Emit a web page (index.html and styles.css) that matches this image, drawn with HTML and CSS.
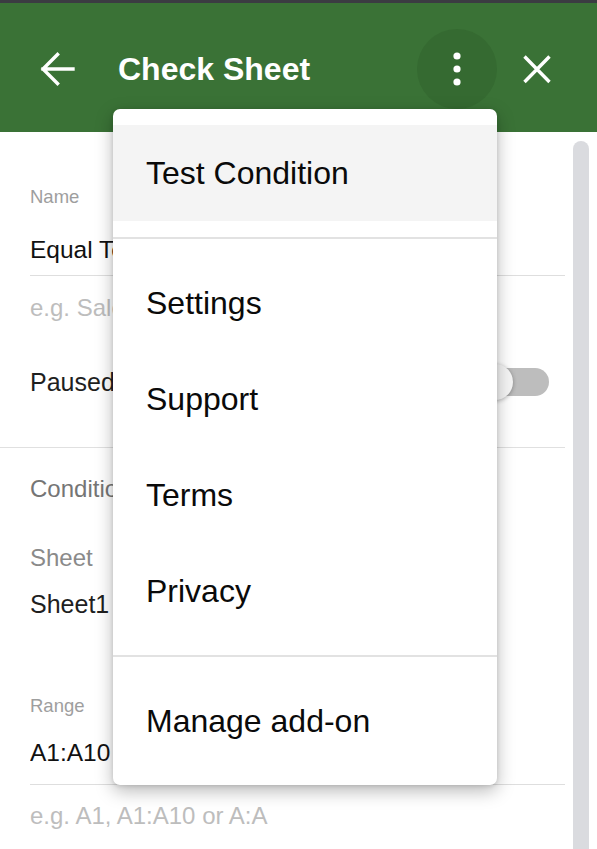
FILE: index.html
```html
<!DOCTYPE html>
<html>
<head>
<meta charset="utf-8">
<link rel="stylesheet" href="styles.css">
</head>
<body>
<div class="statusbar"></div>
<header class="appbar">
  <svg class="icon back" width="36" height="36" viewBox="0 0 36 36"><path d="M33 18H3M17.5 3.5L3 18l14.5 14.5" fill="none" stroke="#fff" stroke-width="3.4" stroke-linecap="square"/></svg>
  <div class="title">Check Sheet</div>
  <div class="spacer"></div>
  <div class="kebab">
    <svg width="20" height="40" viewBox="0 0 20 40"><circle cx="10" cy="7" r="3.6" fill="#fff"/><circle cx="10" cy="20" r="3.6" fill="#fff"/><circle cx="10" cy="33" r="3.6" fill="#fff"/></svg>
  </div>
  <svg class="icon close" width="36" height="36" viewBox="0 0 36 36"><path d="M5.5 5.5l25 25.5M30.5 5.5l-25 25.5" fill="none" stroke="#fff" stroke-width="3.4"/></svg>
</header>
<main class="main">
  <div class="content">
    <section class="sec1">
      <div class="label">Name</div>
      <div class="input">Equal Ten</div>
      <div class="hint">e.g. Sales Alert</div>
      <div class="row">
        <div class="value">Paused</div>
        <div class="toggle"><div class="track"></div><div class="knob"></div></div>
      </div>
    </section>
    <section class="sec2">
      <div class="heading">Condition</div>
      <div class="label big">Sheet</div>
      <div class="value sheet">Sheet1</div>
      <div class="label range">Range</div>
      <div class="input">A1:A10</div>
      <div class="hint">e.g. A1, A1:A10 or A:A</div>
    </section>
  </div>
  <div class="scrollcol"><div class="thumb"></div></div>
</main>
<div class="menu">
  <div class="group">
    <div class="item active">Test Condition</div>
  </div>
  <div class="group">
    <div class="item">Settings</div>
    <div class="item">Support</div>
    <div class="item">Terms</div>
    <div class="item">Privacy</div>
  </div>
  <div class="group">
    <div class="item">Manage add-on</div>
  </div>
</div>
</body>
</html>
```
FILE: styles.css
```css
html, body {
  margin: 0;
  padding: 0;
}
body {
  width: 597px;
  height: 849px;
  overflow: hidden;
  position: relative;
  background: #fff;
  font-family: "Liberation Sans", Arial, Helvetica, sans-serif;
  color: #212121;
}
.statusbar {
  height: 3px;
  background: #3b3b42;
}
.appbar {
  height: 126px;
  padding-top: 3px;
  background: #3a7236;
  display: flex;
  align-items: center;
}
.icon { display: block; flex: none; }
.back { margin-left: 40px; }
.title {
  margin-left: 42px;
  color: #fff;
  font-weight: bold;
  font-size: 32px;
  line-height: 40px;
  white-space: nowrap;
}
.spacer { flex: 1; }
.kebab {
  width: 80px;
  height: 80px;
  border-radius: 50%;
  background: #356a31;
  display: flex;
  align-items: center;
  justify-content: center;
  flex: none;
}
.kebab svg { display: block; }
.close { margin-left: 22px; margin-right: 42px; }

.main {
  display: flex;
  height: 717px;
}
.content {
  width: 565px;
  flex: none;
}
.scrollcol {
  width: 32px;
  flex: none;
}
.thumb {
  margin-top: 9px;
  margin-left: 8px;
  width: 16px;
  height: 720px;
  background: #dadbdf;
  border-radius: 8px 8px 0 0;
}
.sec1 {
  padding-top: 53px;
  padding-left: 30px;
  border-bottom: 1px solid #e0e0e0;
  padding-bottom: 45px;
}
.sec2 {
  padding-left: 30px;
  padding-top: 25px;
}
.label {
  font-size: 18.5px;
  line-height: 24px;
  color: #9e9e9e;
}
.input {
  font-size: 24.5px;
  line-height: 32px;
  color: #111;
  margin-top: 25px;
  padding-bottom: 9px;
  border-bottom: 1px solid #dedede;
  white-space: nowrap;
  overflow: hidden;
}
.hint {
  margin-top: 16px;
  font-size: 24px;
  line-height: 32px;
  color: #bdbdbd;
  white-space: nowrap;
}
.row {
  margin-top: 38px;
  height: 40px;
  display: flex;
  align-items: center;
  justify-content: space-between;
  padding-right: 16px;
}
.value {
  font-size: 25px;
  line-height: 32px;
  color: #1f1f1f;
}
.toggle {
  position: relative;
  width: 72px;
  height: 40px;
}
.track {
  position: absolute;
  right: 0;
  top: 6px;
  width: 56px;
  height: 28px;
  border-radius: 14px;
  background: #bdbdbd;
}
.knob {
  position: absolute;
  left: 0;
  top: 2px;
  width: 36px;
  height: 36px;
  border-radius: 50%;
  background: #f5f5f5;
  box-shadow: 0 1px 4px rgba(0,0,0,0.3);
}
.heading {
  font-size: 24px;
  line-height: 32px;
  color: #757575;
}
.label.big {
  margin-top: 37px;
  font-size: 24px;
  line-height: 32px;
  color: #8a8a8a;
}
.value.sheet { margin-top: 14px; }
.label.range { margin-top: 74px; }
.sec2 .input { margin-top: 19px; padding-bottom: 15px; width: 535px; }
.sec2 .hint { margin-top: 15px; }

.menu {
  position: absolute;
  left: 113px;
  top: 109px;
  width: 384px;
  background: #fff;
  border-radius: 7px;
  box-shadow: 0 6px 18px rgba(0,0,0,0.28), 0 1px 4px rgba(0,0,0,0.12);
  overflow: hidden;
}
.group {
  padding: 16px 0;
}
.group + .group {
  border-top: 2px solid #e2e2e2;
}
.item {
  height: 96px;
  display: flex;
  align-items: center;
  padding-left: 33px;
  font-size: 32px;
  color: #0a0a0a;
  white-space: nowrap;
}
.item.active {
  background: #f4f4f4;
}
```
